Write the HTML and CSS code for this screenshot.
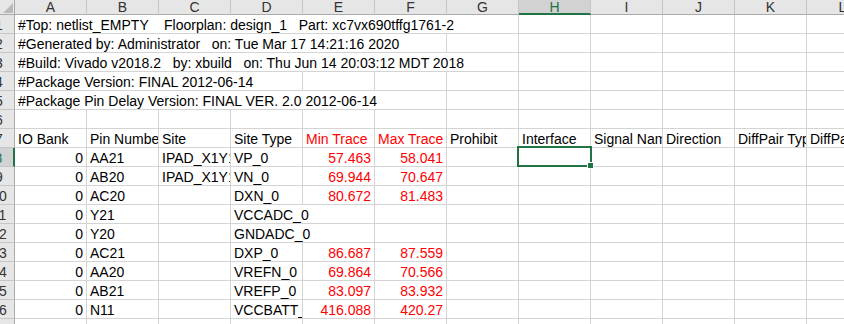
FILE: index.html
```html
<!DOCTYPE html>
<html lang="en">
<head>
  <meta charset="UTF-8" />
  <title>Package pins</title>
  <link rel="stylesheet" href="styles.css">
</head>
<body>
  <div class="sheet">
    <div class="corner"><svg width="10" height="10" viewBox="0 0 10 10"><polygon points="10,0 10,10 0,10" fill="#b9b9b9"/></svg></div>
    <div class="col-head">A</div>
    <div class="col-head">B</div>
    <div class="col-head">C</div>
    <div class="col-head">D</div>
    <div class="col-head">E</div>
    <div class="col-head">F</div>
    <div class="col-head">G</div>
    <div class="col-head active">H</div>
    <div class="col-head">I</div>
    <div class="col-head">J</div>
    <div class="col-head">K</div>
    <div class="col-head">L</div>

    <!-- row 1 -->
    <div class="row-head">1</div>
    <div class="cell span-7">#Top: netlist_EMPTY    Floorplan: design_1   Part: xc7vx690tffg1761-2</div>
    <div class="cell"></div><div class="cell"></div><div class="cell"></div><div class="cell"></div><div class="cell"></div>

    <!-- row 2 -->
    <div class="row-head">2</div>
    <div class="cell span-6">#Generated by: Administrator   on: Tue Mar 17 14:21:16 2020</div>
    <div class="cell"></div><div class="cell"></div><div class="cell"></div><div class="cell"></div><div class="cell"></div><div class="cell"></div>

    <!-- row 3 -->
    <div class="row-head">3</div>
    <div class="cell span-7">#Build: Vivado v2018.2   by: xbuild   on: Thu Jun 14 20:03:12 MDT 2018</div>
    <div class="cell"></div><div class="cell"></div><div class="cell"></div><div class="cell"></div><div class="cell"></div>

    <!-- row 4 -->
    <div class="row-head">4</div>
    <div class="cell span-4">#Package Version: FINAL 2012-06-14</div>
    <div class="cell"></div><div class="cell"></div><div class="cell"></div><div class="cell"></div><div class="cell"></div><div class="cell"></div><div class="cell"></div><div class="cell"></div>

    <!-- row 5 -->
    <div class="row-head">5</div>
    <div class="cell span-6">#Package Pin Delay Version: FINAL VER. 2.0 2012-06-14</div>
    <div class="cell"></div><div class="cell"></div><div class="cell"></div><div class="cell"></div><div class="cell"></div><div class="cell"></div>

    <!-- row 6 -->
    <div class="row-head">6</div>
    <div class="cell"></div><div class="cell"></div><div class="cell"></div><div class="cell"></div><div class="cell"></div><div class="cell"></div>
    <div class="cell"></div><div class="cell"></div><div class="cell"></div><div class="cell"></div><div class="cell"></div><div class="cell"></div>

    <!-- row 7: column titles -->
    <div class="row-head">7</div>
    <div class="cell">IO Bank</div>
    <div class="cell">Pin Number</div>
    <div class="cell">Site</div>
    <div class="cell">Site Type</div>
    <div class="cell red">Min Trace</div>
    <div class="cell red">Max Trace</div>
    <div class="cell">Prohibit</div>
    <div class="cell">Interface</div>
    <div class="cell">Signal Name</div>
    <div class="cell">Direction</div>
    <div class="cell">DiffPair Type</div>
    <div class="cell">DiffPair Signal</div>

    <!-- row 8 -->
    <div class="row-head active">8</div>
    <div class="cell num">0</div><div class="cell">AA21</div><div class="cell">IPAD_X1Y1</div><div class="cell">VP_0</div>
    <div class="cell num red">57.463</div><div class="cell num red">58.041</div>
    <div class="cell"></div><div class="cell"></div><div class="cell"></div><div class="cell"></div><div class="cell"></div><div class="cell"></div>

    <!-- row 9 -->
    <div class="row-head">9</div>
    <div class="cell num">0</div><div class="cell">AB20</div><div class="cell">IPAD_X1Y1</div><div class="cell">VN_0</div>
    <div class="cell num red">69.944</div><div class="cell num red">70.647</div>
    <div class="cell"></div><div class="cell"></div><div class="cell"></div><div class="cell"></div><div class="cell"></div><div class="cell"></div>

    <!-- row 10 -->
    <div class="row-head">10</div>
    <div class="cell num">0</div><div class="cell">AC20</div><div class="cell"></div><div class="cell">DXN_0</div>
    <div class="cell num red">80.672</div><div class="cell num red">81.483</div>
    <div class="cell"></div><div class="cell"></div><div class="cell"></div><div class="cell"></div><div class="cell"></div><div class="cell"></div>

    <!-- row 11 -->
    <div class="row-head">11</div>
    <div class="cell num">0</div><div class="cell">Y21</div><div class="cell"></div><div class="cell span-2">VCCADC_0</div>
    <div class="cell"></div><div class="cell"></div><div class="cell"></div><div class="cell"></div><div class="cell"></div><div class="cell"></div><div class="cell"></div>

    <!-- row 12 -->
    <div class="row-head">12</div>
    <div class="cell num">0</div><div class="cell">Y20</div><div class="cell"></div><div class="cell span-2">GNDADC_0</div>
    <div class="cell"></div><div class="cell"></div><div class="cell"></div><div class="cell"></div><div class="cell"></div><div class="cell"></div><div class="cell"></div>

    <!-- row 13 -->
    <div class="row-head">13</div>
    <div class="cell num">0</div><div class="cell">AC21</div><div class="cell"></div><div class="cell">DXP_0</div>
    <div class="cell num red">86.687</div><div class="cell num red">87.559</div>
    <div class="cell"></div><div class="cell"></div><div class="cell"></div><div class="cell"></div><div class="cell"></div><div class="cell"></div>

    <!-- row 14 -->
    <div class="row-head">14</div>
    <div class="cell num">0</div><div class="cell">AA20</div><div class="cell"></div><div class="cell">VREFN_0</div>
    <div class="cell num red">69.864</div><div class="cell num red">70.566</div>
    <div class="cell"></div><div class="cell"></div><div class="cell"></div><div class="cell"></div><div class="cell"></div><div class="cell"></div>

    <!-- row 15 -->
    <div class="row-head">15</div>
    <div class="cell num">0</div><div class="cell">AB21</div><div class="cell"></div><div class="cell">VREFP_0</div>
    <div class="cell num red">83.097</div><div class="cell num red">83.932</div>
    <div class="cell"></div><div class="cell"></div><div class="cell"></div><div class="cell"></div><div class="cell"></div><div class="cell"></div>

    <!-- row 16 -->
    <div class="row-head">16</div>
    <div class="cell num">0</div><div class="cell">N11</div><div class="cell"></div><div class="cell">VCCBATT_0</div>
    <div class="cell num red">416.088</div><div class="cell num red">420.27</div>
    <div class="cell"></div><div class="cell"></div><div class="cell"></div><div class="cell"></div><div class="cell"></div><div class="cell"></div>

    <!-- row 17 -->
    <div class="row-head">17</div>
    <div class="cell"></div><div class="cell"></div><div class="cell"></div><div class="cell"></div><div class="cell"></div><div class="cell"></div>
    <div class="cell"></div><div class="cell"></div><div class="cell"></div><div class="cell"></div><div class="cell"></div><div class="cell"></div>

    <!-- active cell H8 -->
    <div class="selection"><span class="fill-handle"></span></div>
  </div>
</body>
</html>
```

FILE: styles.css
```css
body {
  margin: 0;
  width: 844px;
  height: 324px;
  overflow: hidden;
  background: #fff;
  font-family: "Liberation Sans", Arial, sans-serif;
  font-size: 14px;
  color: #000;
}

.sheet {
  position: relative;
  display: grid;
  grid-template-columns: 31px repeat(12, 72px);
  grid-template-rows: 15px;
  grid-auto-rows: 19px;
  margin-left: -16px;
  width: max-content;
}

.corner {
  display: flex;
  justify-content: flex-end;
  align-items: flex-end;
  background: #e6e6e6;
  border-right: 1px solid #ababab;
  border-bottom: 1px solid #ababab;
  box-sizing: border-box;
  padding: 0 1px 1px 0;
}

.col-head {
  box-sizing: border-box;
  background: #e6e6e6;
  border-right: 1px solid #c6c6c6;
  border-bottom: 1px solid #ababab;
  text-align: center;
  line-height: 14px;
  color: #333;
}

.col-head.active {
  background: #d2d2d2;
  color: #217346;
  border-bottom: 2px solid #217346;
}

.row-head {
  box-sizing: border-box;
  background: #e6e6e6;
  border-right: 1px solid #ababab;
  border-bottom: 1px solid #c6c6c6;
  text-align: center;
  line-height: 18px;
  padding-top: 1px;
  color: #333;
  overflow: hidden;
}

.row-head.active {
  background: #d2d2d2;
  color: #217346;
  border-right: 2px solid #217346;
}

.cell {
  box-sizing: border-box;
  border-right: 1px solid #d4d4d4;
  border-bottom: 1px solid #d4d4d4;
  padding: 1px 3px 0 3px;
  line-height: 18px;
  white-space: pre;
  overflow: hidden;
}

.num {
  text-align: right;
}

.red {
  color: #ff0000;
}

.span-2 { grid-column: span 2; }
.span-4 { grid-column: span 4; }
.span-6 { grid-column: span 6; }
.span-7 { grid-column: span 7; }

.selection {
  position: absolute;
  left: 533px;
  top: 146px;
  width: 75px;
  height: 21px;
  box-sizing: border-box;
  border: 2px solid #217346;
}

.fill-handle {
  position: absolute;
  right: -4px;
  bottom: -4px;
  width: 5px;
  height: 5px;
  background: #217346;
  border: 1px solid #fff;
}
```
